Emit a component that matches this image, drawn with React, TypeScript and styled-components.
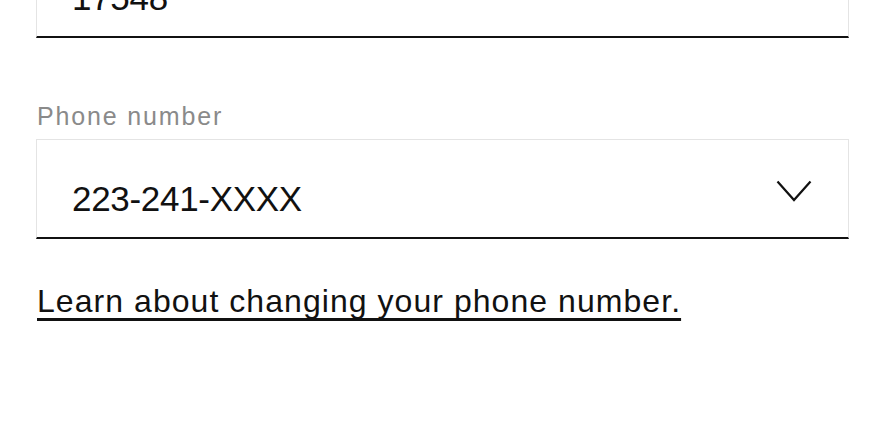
import React from "react";
import styled, { createGlobalStyle } from "styled-components";

const GlobalStyle = createGlobalStyle`
  html, body {
    margin: 0;
    padding: 0;
    background: #ffffff;
  }
  body {
    font-family: "Liberation Sans", Arial, sans-serif;
    color: #111111;
    overflow: hidden;
  }
`;

const Form = styled.div`
  display: flex;
  flex-direction: column;
  gap: 63px;
  padding: 0 37px 0 36px;
  /* the page is scrolled: the first field sits partly above the top edge */
  margin-top: -100px;
`;

const Group = styled.div`
  display: flex;
  flex-direction: column;
`;

const Label = styled.label`
  font-size: 25px;
  line-height: 30px;
  letter-spacing: 1.85px;
  color: #8a8a8a;
  padding-left: 1px;
  margin-bottom: 8px;
`;

const Box = styled.div`
  display: flex;
  align-items: center;
  height: 100px;
  box-sizing: border-box;
  padding: 4px 36px 0 35px;
  border: 1px solid #e4e4e4;
  border-bottom: 2px solid #111111;
`;

const Value = styled.span`
  padding-top: 16px;
  font-size: 35px;
  line-height: 40px;
  letter-spacing: -0.3px;
  color: #111111;
`;

const Chevron = styled.svg`
  margin-left: auto;
  width: 36px;
  height: 22px;
  flex-shrink: 0;
`;

const LearnLink = styled.a`
  align-self: flex-start;
  margin-top: -21px;
  font-size: 32px;
  line-height: 40px;
  letter-spacing: 1.05px;
  color: #111111;
  padding-left: 1px;
  text-decoration: underline;
  text-decoration-thickness: 2.5px;
  text-decoration-skip-ink: none;
  text-underline-offset: 6px;
  cursor: pointer;
`;

const ChevronDown = () => (
  <Chevron viewBox="0 0 36 22" fill="none">
    <polyline
      points="1.5,1.5 18,20 34.5,1.5"
      stroke="#111111"
      strokeWidth="2.2"
      strokeLinejoin="miter"
    />
  </Chevron>
);

export default function App() {
  return (
    <>
      <GlobalStyle />
      <Form>
        <Group>
          <Label>ZIP code</Label>
          <Box>
            <Value>17548</Value>
          </Box>
        </Group>
        <Group>
          <Label>Phone number</Label>
          <Box>
            <Value>223-241-XXXX</Value>
            <ChevronDown />
          </Box>
        </Group>
        <LearnLink>Learn about changing your phone number.</LearnLink>
      </Form>
    </>
  );
}
